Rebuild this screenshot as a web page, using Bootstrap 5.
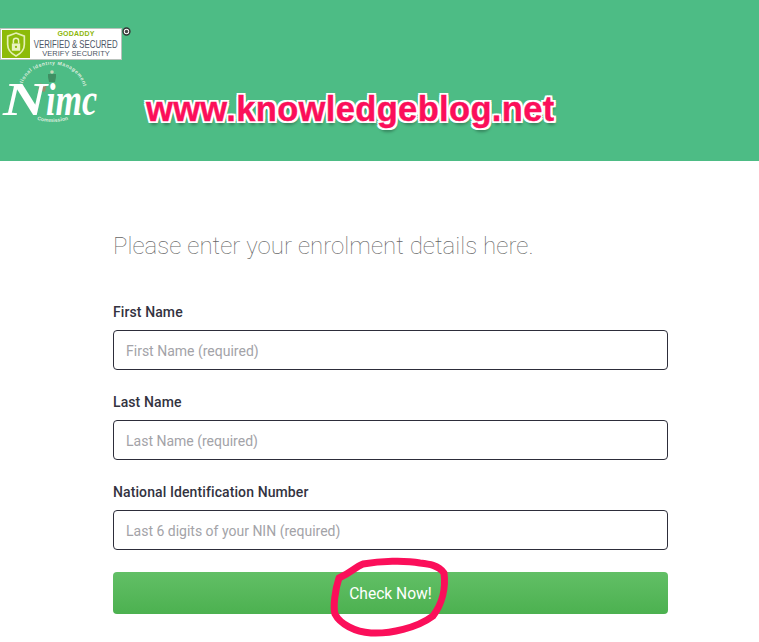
<!DOCTYPE html>
<html lang="en">
<head>
<meta charset="utf-8">
<title>NIMC</title>
<link href="https://cdn.jsdelivr.net/npm/bootstrap@5.3.0/dist/css/bootstrap.min.css" rel="stylesheet">
<style>
html,body{height:642px;overflow:hidden}
body{font-family:Roboto,"Liberation Sans",sans-serif;background:#fff;color:#2d2d3a;position:relative}
.hero{height:161px;background:#4dbc85;padding:28px 0 0 0}
.trust{width:122px;height:32px;background:#fff;border:1px solid #b9c2bc}
.trust-lock{width:28px;height:28px;margin:1px;background:#8dbb0a;flex:none}
.trust-txt{flex:1;min-width:0;line-height:1;font-family:"Liberation Sans",sans-serif;text-align:center}
.trust-a{font-size:7px;font-weight:700;color:#8db70c;line-height:8px;letter-spacing:.2px}
.trust-b{font-size:11.5px;color:#4d5666;line-height:12px;white-space:nowrap;transform:scaleX(.68);transform-origin:center;flex:none}
.trust-c{font-size:7.5px;color:#4d5666;line-height:8px;letter-spacing:.05px;white-space:nowrap}
.reg{position:absolute;left:122px;top:27px;width:9px;height:9px}
.logo{position:absolute;left:2px;top:62px;width:98px;height:66px}
.logo-main{font-family:"Liberation Serif",serif;font-style:italic;font-weight:700;font-size:47px;fill:#fff}
.logo-ring{font-family:"Liberation Sans",sans-serif;font-weight:700;font-size:5.2px;fill:#dcecdf}
.site{position:absolute;left:146px;top:88px;margin:0;font-family:"Liberation Sans",sans-serif;font-weight:700;font-size:34.5px;line-height:42px;color:#fb0f5a;letter-spacing:.35px;-webkit-text-stroke:.4px #fb0f5a;text-shadow:-2px 0 0 #fff,2px 0 0 #fff,0 -2px 0 #fff,0 2px 0 #fff,-2px -2px 0 #fff,2px -2px 0 #fff,-2px 2px 0 #fff,2px 2px 0 #fff,1px 4px 3px rgba(0,0,0,.3)}
.panel{width:555px;margin-left:113px;padding-top:70px}
.lead-line{font-weight:100;font-size:24px;line-height:30px;color:#666;margin:0 0 41px;letter-spacing:.05px}
.fld{margin-bottom:22px}
.fld-label{display:block;font-size:14px;font-weight:500;line-height:20px;color:#33333f;margin-bottom:8px;letter-spacing:.1px}
.fld-input.form-control{height:40px;border:1px solid #2d2d3a;border-radius:4px;padding:2px 12px 0;font-size:14px;font-family:Roboto,sans-serif;color:#333;box-shadow:none}
.fld-input.form-control::placeholder{color:#a3a3a8;opacity:1}
.go.btn{width:100%;height:42px;border:0;border-radius:4px;color:#fff;font-size:15.6px;background:linear-gradient(#62bf66,#4cb150);padding:3px 0 0}
.scribble{position:absolute;left:325px;top:552px;width:130px;height:90px;pointer-events:none}
</style>
</head>
<body>
<header class="hero">
  <div class="trust d-flex align-items-center">
    <div class="trust-lock d-flex align-items-center justify-content-center">
      <svg width="22" height="25" viewBox="0 0 20 24"><path d="M10 1 18 4V12C18 17 14 21 10 23 6 21 2 17 2 12V4Z" fill="none" stroke="#e4f0b4" stroke-width="1.6"/><path d="M6 11h8v7H6Z" fill="#e9f3c0"/><path d="M7.5 11V8.5a2.5 2.5 0 0 1 5 0V11" fill="none" stroke="#e9f3c0" stroke-width="1.4"/><circle cx="10" cy="14.3" r="1.1" fill="#8dbb0a"/></svg>
    </div>
    <div class="trust-txt d-flex flex-column align-items-center">
      <div class="trust-a">GODADDY</div>
      <div class="trust-b">VERIFIED &amp; SECURED</div>
      <div class="trust-c">VERIFY SECURITY</div>
    </div>
  </div>
  <svg class="reg" viewBox="0 0 10 10"><circle cx="5" cy="5" r="3.8" fill="#fff" stroke="#333" stroke-width="1.6"/><circle cx="5" cy="5" r="1.9" fill="#444"/></svg>
  <svg class="logo" viewBox="0 0 98 66">
    <defs>
      <path id="ringTop" d="M19 30A31 27 0 0 1 82 30"/>
      <path id="ringBot" d="M33 57Q50 63 68 57"/>
    </defs>
    <text class="logo-ring"><textPath href="#ringTop" startOffset="1" textLength="86">National Identity Management</textPath></text>
    <text class="logo-ring"><textPath href="#ringBot" startOffset="2" textLength="32">Commission</textPath></text>
    <path d="M46 12h8v3l-1 5h-6l-1-5Z" fill="#3f8f63"/><circle cx="50" cy="10" r="1.8" fill="#c9d8b8"/>
    <rect x="37" y="22" width="7" height="7" fill="#a08a6a" transform="rotate(15 40 25)"/>
    <text class="logo-main" y="53"><tspan x="1" textLength="44" lengthAdjust="spacingAndGlyphs">N</tspan><tspan x="44" textLength="51" lengthAdjust="spacingAndGlyphs">imc</tspan></text>
  </svg>
  <p class="site">www.knowledgeblog.net</p>
</header>
<main class="panel">
  <p class="lead-line">Please enter your enrolment details here.</p>
  <form>
    <div class="fld">
      <label class="fld-label" for="f1">First Name</label>
      <input id="f1" class="form-control fld-input" type="text" placeholder="First Name (required)">
    </div>
    <div class="fld">
      <label class="fld-label" for="f2">Last Name</label>
      <input id="f2" class="form-control fld-input" type="text" placeholder="Last Name (required)">
    </div>
    <div class="fld">
      <label class="fld-label" for="f3">National Identification Number</label>
      <input id="f3" class="form-control fld-input" type="text" placeholder="Last 6 digits of your NIN (required)">
    </div>
    <button class="btn go" type="button">Check Now!</button>
  </form>
</main>
<svg class="scribble" viewBox="0 0 130 90"><path d="M95 11C80 8 55 9 38 12 30 15 27 20 14 26 10 38 8 55 10 62 15 72 30 80 46 81 65 82 92 76 108 64 117 52 121 36 119 21 113 13 104 12 95 11Z" fill="none" stroke="#fb0f5a" stroke-width="7" stroke-linejoin="round"/></svg>
</body>
</html>
